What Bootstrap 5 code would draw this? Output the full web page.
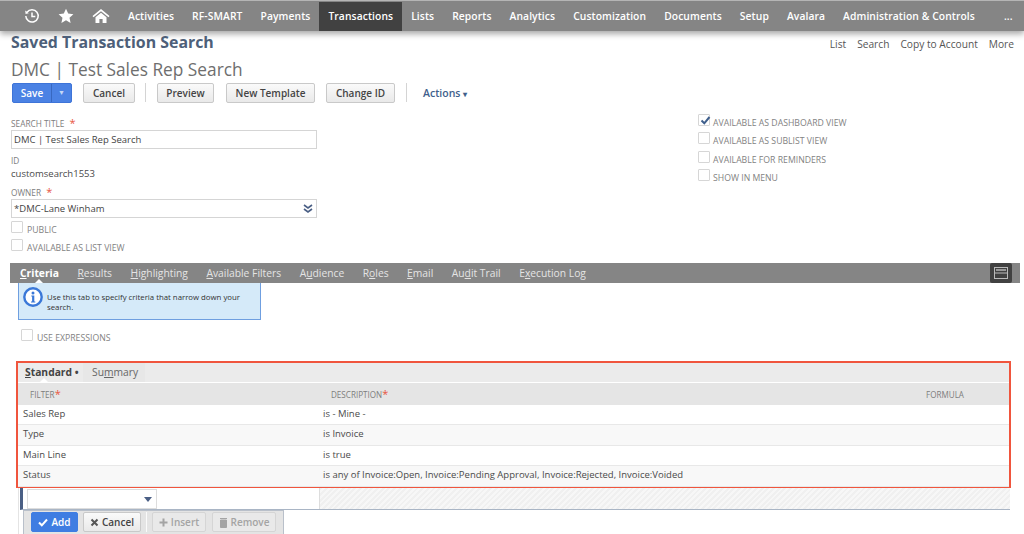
<!DOCTYPE html>
<html lang="en">
<head>
<meta charset="UTF-8">
<title>Saved Transaction Search</title>
<link rel="stylesheet" href="https://cdn.jsdelivr.net/npm/bootstrap@5.3.0/dist/css/bootstrap.min.css">
<style>
html, body { height: 534px; overflow: hidden; }
body { font-family: "Open Sans", "Liberation Sans", sans-serif; font-size: 9.5px; color: #4a4a4a; background: #fff; }
.topnav { height: 31px; border-top: 1px solid #b5b5b5; background: #858585; box-shadow: 0 3px 6px rgba(0,0,0,.35); padding-left: 24px; }
.topnav svg { display: block; flex: none; }
.nav-icons { width: 95px; flex: none; gap: 18px; }
.topnav a { display: block; height: 29px; line-height: 29px; padding: 0 9px; color: #fff; font-size: 10.3px; font-weight: 600; letter-spacing: .09px; text-decoration: none; white-space: nowrap; }
.topnav a.on { background: #414141; }
.topnav a.more-dots { margin-left: 11px; }
.page-head { height: 25px; padding: 0 10px 0 11px; }
.page-kind { font-size: 15.9px; font-weight: 700; color: #4d5f79; line-height: 22px; }
.head-links { gap: 11px; font-size: 10.2px; color: #555; padding-top: 6px; }
.rec-title { font-size: 17.3px; color: #6e6e6e; padding-left: 11px; line-height: 23px; height: 25px; margin-top: 2px; }
.tool-row { padding-left: 12px; height: 20px; }
.ns-btn { height: 20px; border: 1px solid #c9c9c9; border-radius: 2px; background: linear-gradient(#fafafa, #e9e9e9); font-size: 10px; font-weight: 600; color: #444; padding: 0; line-height: 18px; text-align: center; }
.btn-save { width: 60px; background: #4b82e4; border-color: #3e74d8; color: #fff; display: flex; }
.btn-save span:first-child { flex: 1; border-right: 1px solid #3868c0; }
.btn-save span:last-child { width: 19px; font-size: 7px; color: #c6d8f6; }
.w-cancel { width: 52px; margin-left: 11px; }
.w-preview { width: 57px; margin-left: 11px; }
.w-tmpl { width: 89px; margin-left: 12px; }
.w-change { width: 69px; margin-left: 11px; }
.tool-sep { width: 1px; height: 19px; background: #d4d4d4; margin-left: 10px; }
.tool-sep.second { margin-left: 11px; }
.actions-link { color: #3f5f8c; font-size: 10.5px; font-weight: 600; margin-left: 16px; padding-top: 3px; }
.actions-link small { font-size: 8px; }
.form-area { height: 160px; }
.form-left { width: 306px; flex: none; margin-left: 11px; padding-top: 14px; }
.form-right { margin-left: 381px; padding-top: 12px; }
.fld-label { font-size: 8.3px; color: #7d7d7d; line-height: 12px; text-transform: uppercase; }
.fld-label b { color: #e8563f; font-weight: 400; font-size: 11px; margin-left: 3px; }
.fld-box { height: 19px; border: 1px solid #d5d5d5; font-size: 9.5px; color: #444; line-height: 17px; padding-left: 2px; position: relative; }
.fld-id { margin-top: 6px; }
.fld-value { line-height: 13px; margin-bottom: 6px; }
.fld-arrow { position: absolute; right: 3px; top: 4px; }
.chk-row { height: 18.3px; gap: 3px; font-size: 8.7px; color: #828282; }
.form-left .chk-row { gap: 4px; }
.chk-box { width: 12px; height: 12px; border: 1px solid #d6d6d6; border-radius: 1px; flex: none; margin-top: -1px; position: relative; background: #fff; }
.chk-box svg { position: absolute; left: 1px; top: 0; }
.chk-text { margin-top: 2px; }
.tab-bar { height: 20px; margin: 0 4px 0 10px; background: #858585; position: relative; padding-left: 10px; gap: 18.5px; font-size: 10.3px; line-height: 20px; color: #e4e4e4; }
.tab-bar .on { color: #fff; font-weight: 700; position: relative; }
.tab-bar .on::after { content: ""; position: absolute; left: 50%; margin-left: -4px; bottom: 0; border: 4px solid transparent; border-top: 0; border-bottom-color: #fff; }
.tab-toggle { position: absolute; right: 8px; top: 0; width: 22px; height: 20px; background: #414141; border-radius: 2px; display: flex; align-items: center; justify-content: center; }
.info-note { width: 243px; height: 37px; margin-left: 18px; background: #d5eaf9; border: 1px solid #6f9fe0; border-top: 0; padding: 9px 6px 0 4px; gap: 4px; font-size: 7.8px; line-height: 10.2px; color: #333; }
.info-note svg { margin-top: -5px; }
.use-expr { margin: 9px 0 0 21px; height: 18px; gap: 4px; }
.use-expr .chk-box { margin-top: 0; }
.use-expr .chk-text { margin-top: 3px; }
.crit-box { margin: 14px 0 0 16px; width: 995px; height: 127px; border: 2px solid #f0553d; background: #fff; position: relative; z-index: 1; }
.sub-tabs { height: 20px; background: #ebebeb; border-bottom: 1px solid #fff; font-size: 10.3px; line-height: 18.5px; color: #666; }
.sub-tabs .on { font-weight: 700; color: #444; padding: 0 0 0 7px; width: 65px; position: relative; }
.sub-tabs .on::after { content: ""; position: absolute; left: 22px; bottom: 0; border: 4px solid transparent; border-top: 0; border-bottom-color: #fff; }
.sub-tabs .off { background: #e7e7e7; padding: 0 7px 0 9px; }
.grid-row { display: grid; grid-template-columns: 299px 1fr; height: 20.4px; line-height: 17.5px; border-bottom: 1px solid #e8e8e8; padding-left: 5px; background: #fff; }
.grid-row.alt { background: #f8f8f8; }
.grid-row div:last-child { padding-left: 1px; }
.grid-row.hdr { grid-template-columns: 301px 594px 1fr; height: 22px; line-height: 24px; background: #e5e5e5; border-bottom: 0; font-size: 8.1px; color: #7d7d7d; padding-left: 12px; }
.grid-row.hdr b { color: #e8563f; font-weight: 400; font-size: 11px; line-height: 10px; }
.add-row { margin-left: 20px; width: 990px; height: 22px; display: flex; border-bottom: 1px solid #a9b5c5; border-left: 3px solid #4a5f85; }
.add-select { width: 130px; height: 20px; margin: 1px 0 0 4px; border: 1px solid #ddd; position: relative; }
.add-select::after { content: ""; position: absolute; right: 4px; top: 7px; border: 4px solid transparent; border-bottom: 0; border-top: 5px solid #4a5f85; }
.add-blank { width: 162px; }
.add-hatch { flex: 1; background: repeating-linear-gradient(135deg, #f0f0f0 0 2px, #f7f7f7 2px 4px); border-left: 1px solid #ddd; }
.add-tools { margin-left: 23px; width: 261px; height: 26px; background: #e4e4e4; border: 1px solid #b9c0ca; border-bottom: 0; padding: 1px 0 0 7px; }
.add-tools .ns-btn { font-size: 10px; display: flex; align-items: center; justify-content: center; gap: 3px; }
.add-tools .btn-add { width: 47px; background: #3f7de2; border-color: #3f7de2; color: #fff; }
.add-tools .btn-off { color: #a4a4a4; background: #e9e9e9; border-color: #d5d5d5; }
.w-row-cancel { width: 58px; margin-left: 5px; }
.w-insert { width: 54px; }
.w-remove { width: 64px; margin-left: 6px; }
.tools-sep { width: 1px; height: 20px; background: #fafafa; margin: 0 5px; }
.page-rule { position: absolute; left: 18px; top: 488px; width: 1px; height: 46px; background: #e4e4e4; }
</style>
</head>
<body>

<!-- top menu -->
<nav class="topnav d-flex align-items-center">
    <div class="nav-icons d-flex align-items-center">
        <svg width="16" height="16" viewBox="0 0 16 16"><path d="M3 4.2A6.2 6.2 0 1 1 1.8 8" fill="none" stroke="#fff" stroke-width="1.5"/><path d="M1.2 2.5l.4 3.4 3.2-.6z" fill="#fff"/><path d="M8 4.5v4h3.3" fill="none" stroke="#fff" stroke-width="1.5"/></svg>
        <svg width="16" height="16" viewBox="0 0 16 16"><path d="M8 .8l2.2 4.8 5.2.6-3.9 3.5 1.1 5.2L8 12.3l-4.6 2.6 1.1-5.2L.6 6.2l5.2-.6z" fill="#fff"/></svg>
        <svg width="18" height="16" viewBox="0 0 18 16"><path d="M9 1L0.5 8l1 1.2L9 3.2l7.5 6 1-1.2z" fill="#fff"/><path d="M3.5 9.2L9 4.8l5.5 4.4V15H10.6v-4H7.4v4H3.5z" fill="#fff"/></svg>
    </div>
    <a href="#">Activities</a><a href="#">RF-SMART</a><a href="#">Payments</a><a href="#" class="on">Transactions</a><a href="#">Lists</a><a href="#">Reports</a><a href="#">Analytics</a><a href="#">Customization</a><a href="#">Documents</a><a href="#">Setup</a><a href="#">Avalara</a><a href="#">Administration &amp; Controls</a><a href="#" class="more-dots">...</a>
</nav>

<!-- page heading -->
<div class="page-head d-flex justify-content-between">
    <div class="page-kind">Saved Transaction Search</div>
    <div class="head-links d-flex"><span>List</span><span>Search</span><span>Copy to Account</span><span>More</span></div>
</div>
<div class="rec-title">DMC | Test Sales Rep Search</div>

<div class="tool-row d-flex">
    <div class="ns-btn btn-save"><span>Save</span><span>&#9660;</span></div>
    <div class="ns-btn w-cancel">Cancel</div>
    <div class="tool-sep"></div>
    <div class="ns-btn w-preview">Preview</div>
    <div class="ns-btn w-tmpl">New Template</div>
    <div class="ns-btn w-change">Change ID</div>
    <div class="tool-sep second"></div>
    <div class="actions-link">Actions <small>&#9662;</small></div>
</div>

<!-- main fields -->
<div class="form-area d-flex">
    <div class="form-left">
        <div class="fld-label">Search Title <b>*</b></div>
        <div class="fld-box">DMC | Test Sales Rep Search</div>
        <div class="fld-label fld-id">ID</div>
        <div class="fld-value">customsearch1553</div>
        <div class="fld-label">Owner <b>*</b></div>
        <div class="fld-box">*DMC-Lane Winham
            <svg class="fld-arrow" width="10" height="10" viewBox="0 0 10 10"><path d="M1 1l4 3 4-3M1 5l4 3 4-3" fill="none" stroke="#4a5f85" stroke-width="1.6"/></svg>
        </div>
        <div class="chk-row d-flex mt-1"><span class="chk-box"></span><span class="chk-text">PUBLIC</span></div>
        <div class="chk-row d-flex"><span class="chk-box"></span><span class="chk-text">AVAILABLE AS LIST VIEW</span></div>
    </div>
    <div class="form-right">
        <div class="chk-row d-flex"><span class="chk-box"><svg width="11" height="11" viewBox="0 0 11 11"><path d="M1.5 5.5l2.8 2.8L9.5 2" fill="none" stroke="#3f5f8c" stroke-width="2"/></svg></span><span class="chk-text">AVAILABLE AS DASHBOARD VIEW</span></div>
        <div class="chk-row d-flex"><span class="chk-box"></span><span class="chk-text">AVAILABLE AS SUBLIST VIEW</span></div>
        <div class="chk-row d-flex"><span class="chk-box"></span><span class="chk-text">AVAILABLE FOR REMINDERS</span></div>
        <div class="chk-row d-flex"><span class="chk-box"></span><span class="chk-text">SHOW IN MENU</span></div>
    </div>
</div>

<!-- tabs -->
<div class="tab-bar d-flex">
    <span class="on"><u>C</u>riteria</span>
    <span><u>R</u>esults</span>
    <span><u>H</u>ighlighting</span>
    <span><u>A</u>vailable Filters</span>
    <span>A<u>u</u>dience</span>
    <span>R<u>o</u>les</span>
    <span><u>E</u>mail</span>
    <span>Au<u>d</u>it Trail</span>
    <span>E<u>x</u>ecution Log</span>
    <div class="tab-toggle"><svg width="14" height="12" viewBox="0 0 14 12"><rect x=".5" y=".5" width="13" height="11" fill="none" stroke="#bbb"/><path d="M0 6h14" stroke="#bbb"/><path d="M2 3h10" stroke="#999" stroke-width="2"/></svg></div>
</div>

<div class="info-note d-flex">
    <svg width="20" height="20" viewBox="0 0 20 20" class="flex-shrink-0"><circle cx="10" cy="10" r="8.7" fill="#fff" stroke="#3a78d8" stroke-width="2.4"/><circle cx="10" cy="6" r="1.5" fill="#3a78d8"/><path d="M8.3 8.6h3v6h1v1H8v-1h1.1v-5h-.8z" fill="#3a78d8"/></svg>
    <div>Use this tab to specify criteria that narrow down your search.</div>
</div>

<div class="use-expr chk-row d-flex"><span class="chk-box"></span><span class="chk-text">USE EXPRESSIONS</span></div>

<!-- criteria table -->
<div class="crit-box">
    <div class="sub-tabs d-flex">
        <div class="on"><u>S</u>tandard &bull;</div>
        <div class="off">Su<u>m</u>mary</div>
    </div>
    <div class="grid-row hdr"><div>FILTER<b>*</b></div><div>DESCRIPTION<b>*</b></div><div>FORMULA</div></div>
    <div class="grid-row"><div>Sales Rep</div><div>is - Mine -</div></div>
    <div class="grid-row alt"><div>Type</div><div>is Invoice</div></div>
    <div class="grid-row"><div>Main Line</div><div>is true</div></div>
    <div class="grid-row alt"><div>Status</div><div>is any of Invoice:Open, Invoice:Pending Approval, Invoice:Rejected, Invoice:Voided</div></div>
</div>

<div class="add-row">
    <div class="add-select"></div>
    <div class="add-blank"></div>
    <div class="add-hatch"></div>
</div>

<div class="add-tools d-flex">
    <div class="ns-btn btn-add"><svg width="10" height="9" viewBox="0 0 10 9"><path d="M1 4.5l2.8 2.8L9 1.5" fill="none" stroke="#fff" stroke-width="2"/></svg>Add</div>
    <div class="ns-btn w-row-cancel"><svg width="9" height="9" viewBox="0 0 9 9"><path d="M1.5 1.5l6 6M7.5 1.5l-6 6" stroke="#555" stroke-width="2"/></svg>Cancel</div>
    <div class="tools-sep"></div>
    <div class="ns-btn btn-off w-insert"><svg width="9" height="9" viewBox="0 0 9 9"><path d="M4.5 .5v8M.5 4.5h8" stroke="#a4a4a4" stroke-width="2"/></svg>Insert</div>
    <div class="ns-btn btn-off w-remove"><svg width="9" height="11" viewBox="0 0 9 11"><path d="M1 1.5h7M1.5 3h6v7.5h-6z" fill="#a4a4a4" stroke="#a4a4a4"/></svg>Remove</div>
</div>
<div class="page-rule"></div>

<script src="https://cdn.jsdelivr.net/npm/bootstrap@5.3.0/dist/js/bootstrap.bundle.min.js"></script>
</body>
</html>
